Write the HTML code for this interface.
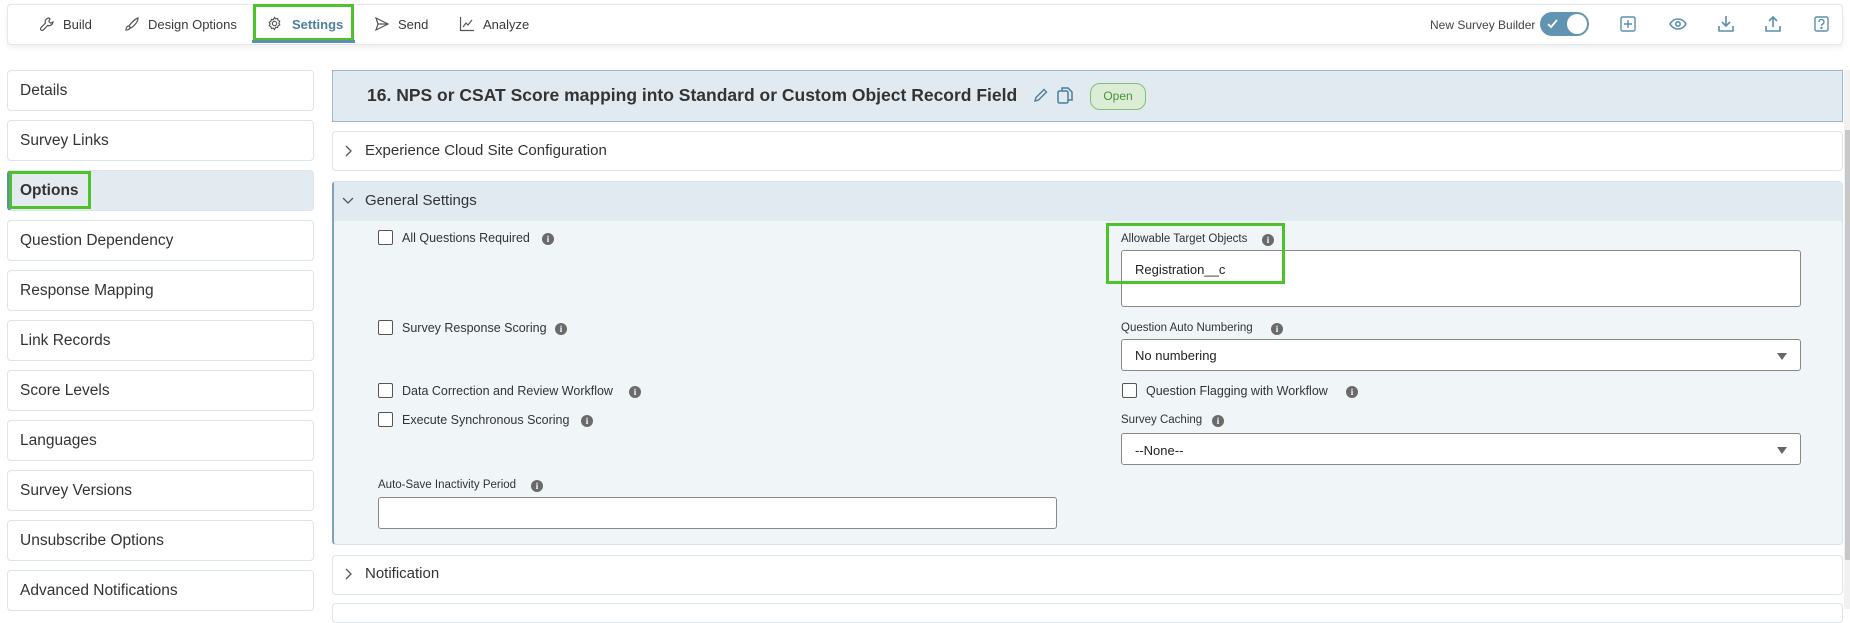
<!DOCTYPE html>
<html><head><meta charset="utf-8"><style>
*{box-sizing:border-box;margin:0;padding:0}
body{width:1850px;height:609px;overflow:hidden;background:#fff;font-family:"Liberation Sans",sans-serif;color:#3a3a3a;position:relative}
.a{position:absolute}
.t{position:absolute;white-space:nowrap;line-height:1}
.side{position:absolute;left:7px;width:307px;height:41px;border:1px solid #dde5ea;border-radius:4px;background:#fff;font-size:15.5px;color:#333;padding-left:12px;line-height:39px}
.cb{position:absolute;width:15px;height:15px;border:1px solid #555;border-radius:2px;background:#fff}
.lbl{font-size:12.5px;color:#333}
.sl{font-size:11.5px;color:#333}
.info{position:absolute;width:12px;height:12px;border-radius:50%;background:#6a6a6a;color:#fff;font-size:9px;font-weight:bold;text-align:center;line-height:12px;font-family:"Liberation Serif",serif}
.inp{position:absolute;background:#fff;border:1px solid #888;border-radius:3px}
.ic{position:absolute}
</style></head><body>
<div class="a" style="left:7px;top:4px;width:1836px;height:41px;border:1px solid #e3e6ea;border-radius:4px;box-shadow:0 3px 6px rgba(0,0,0,0.06)"></div>
<svg class="ic" style="left:39px;top:16px" width="16" height="16" viewBox="0 0 16 16" fill="none" stroke="#555" stroke-width="1.2"><path d="M10 2a4 4 0 0 0-3.6 5.2L2 11.6a1.5 1.5 0 0 0 2.3 2.3l4.4-4.4A4 4 0 0 0 14 6l-2.4 1.2-1.8-1.8L11 3z"/></svg>
<div class="t" style="left:63px;top:18px;font-size:13px">Build</div>
<svg class="ic" style="left:124px;top:16px" width="16" height="16" viewBox="0 0 16 16" fill="none" stroke="#555" stroke-width="1.2"><path d="M14 2c-3 1-7 5-9 8l2 2c3-2 7-6 7-10zM5 10c-2 0-3 1.5-3 4 2.5 0 4-1 4-3"/></svg>
<div class="t" style="left:148px;top:18px;font-size:13px">Design Options</div>
<div class="a" style="left:253px;top:4px;width:101px;height:37px;border:3px solid #4dc22a"></div>
<div class="a" style="left:252px;top:40px;width:103px;height:3px;background:#5b8fae"></div>
<svg class="ic" style="left:267px;top:16px" width="15" height="15" viewBox="0 0 16 16" fill="none" stroke="#555" stroke-width="1.2"><circle cx="8" cy="8" r="2.3"/><path d="M8 1.5l1.3 1.6 2-.5.5 2 1.8 1-.9 1.9.9 1.9-1.8 1-.5 2-2-.5L8 14.5l-1.3-1.6-2 .5-.5-2-1.8-1 .9-1.9-.9-1.9 1.8-1 .5-2 2 .5z"/></svg>
<div class="t" style="left:292px;top:18px;font-size:13px;font-weight:bold;color:#4f7f9f">Settings</div>
<svg class="ic" style="left:374px;top:16px" width="16" height="16" viewBox="0 0 16 16" fill="none" stroke="#555" stroke-width="1.2"><path d="M2 2l12 6-12 6 2-6z M4 8h10"/></svg>
<div class="t" style="left:398px;top:18px;font-size:13px">Send</div>
<svg class="ic" style="left:459px;top:16px" width="16" height="16" viewBox="0 0 16 16" fill="none" stroke="#555" stroke-width="1.2"><path d="M1.5 1v13.5H15 M4 11l3-4 2 2 4-5"/></svg>
<div class="t" style="left:483px;top:18px;font-size:13px">Analyze</div>
<div class="t" style="left:1430px;top:19px;font-size:12px;color:#444">New Survey Builder</div>
<div class="a" style="left:1540px;top:12px;width:49px;height:24px;border-radius:12px;background:#6194b2"></div>
<div class="a" style="left:1567px;top:14px;width:20px;height:20px;border-radius:50%;background:#fff"></div>
<svg class="ic" style="left:1546px;top:18px" width="13" height="12" viewBox="0 0 13 12" fill="none" stroke="#fff" stroke-width="1.8"><path d="M2 6l3 3 6-7"/></svg>
<svg class="ic" style="left:1620px;top:16px" width="16" height="16" viewBox="0 0 16 16" fill="none" stroke="#5b8fae" stroke-width="1.4"><rect x="1" y="1" width="14" height="14" rx="1.5"/><path d="M8 4v8M4 8h8"/></svg>
<svg class="ic" style="left:1669px;top:16px" width="18" height="16" viewBox="0 0 18 16" fill="none" stroke="#5b8fae" stroke-width="1.6"><path d="M1 8c2-3.5 5-5 8-5s6 1.5 8 5c-2 3.5-5 5-8 5s-6-1.5-8-5z"/><circle cx="9" cy="8" r="2.2"/></svg>
<svg class="ic" style="left:1718px;top:15px" width="16" height="17" viewBox="0 0 16 17" fill="none" stroke="#5b8fae" stroke-width="1.6"><path d="M8 1v10M4 7l4 4 4-4M1 11v5h14v-5"/></svg>
<svg class="ic" style="left:1765px;top:15px" width="16" height="17" viewBox="0 0 16 17" fill="none" stroke="#5b8fae" stroke-width="1.6"><path d="M8 12V2M4 6l4-4 4 4M1 11v5h14v-5"/></svg>
<svg class="ic" style="left:1814px;top:16px" width="15" height="16" viewBox="0 0 15 16" fill="none" stroke="#5b8fae" stroke-width="1.4"><rect x="1" y="1" width="13" height="14" rx="1.5"/><path d="M5 6a2.5 2.5 0 1 1 3.5 2.2c-.7.3-1 .8-1 1.6"/><circle cx="7.5" cy="12" r=".5"/></svg>
<div class="side" style="top:70px">Details</div>
<div class="side" style="top:120px">Survey Links</div>
<div class="side" style="top:170px;background:#e3eaf0;border-left:3px solid #5b8fae;padding-left:10px;font-weight:bold">Options</div>
<div class="a" style="left:9px;top:171px;width:82px;height:38px;border:3px solid #4dc22a"></div>
<div class="side" style="top:220px">Question Dependency</div>
<div class="side" style="top:270px">Response Mapping</div>
<div class="side" style="top:320px">Link Records</div>
<div class="side" style="top:370px">Score Levels</div>
<div class="side" style="top:420px">Languages</div>
<div class="side" style="top:470px">Survey Versions</div>
<div class="side" style="top:520px">Unsubscribe Options</div>
<div class="side" style="top:570px">Advanced Notifications</div>
<div class="a" style="left:332px;top:70px;width:1511px;height:52px;background:#e2eaf1;border:1px solid #9db8ca"></div>
<div class="t" style="left:367px;top:87px;font-size:17.5px;font-weight:bold;color:#333">16. NPS or CSAT Score mapping into Standard or Custom Object Record Field</div>
<svg class="ic" style="left:1033px;top:88px" width="15" height="15" viewBox="0 0 15 15" fill="none" stroke="#4a7d9c" stroke-width="1.4"><path d="M2 13l1-3.5 8-8 2.5 2.5-8 8z"/></svg>
<svg class="ic" style="left:1056px;top:86px" width="18" height="18" viewBox="0 0 18 18" fill="none" stroke="#4a7d9c" stroke-width="1.5"><path d="M6 5V2h6l4 4v8h-4"/><rect x="2" y="5" width="10" height="12" rx="1.5"/></svg>
<div class="a" style="left:1090px;top:83px;width:56px;height:27px;border:1px solid #86bd7a;border-radius:10px;background:#dbeed5;color:#4c8f3c;font-size:12px;text-align:center;line-height:25px">Open</div>
<div class="a" style="left:332px;top:131px;width:1511px;height:40px;border:1px solid #dde5ea;border-radius:4px;background:#fff"></div>
<svg class="ic" style="left:343px;top:144px" width="10" height="14" viewBox="0 0 10 14" fill="none" stroke="#555" stroke-width="1.3"><path d="M3 2l5 5-5 5"/></svg>
<div class="t" style="left:365px;top:143px;font-size:15px;color:#333">Experience Cloud Site Configuration</div>
<div class="a" style="left:332px;top:181px;width:1511px;height:364px;border:1px solid #d8e2e9;border-left:2px solid #7fa3bb;border-radius:4px;background:#f0f5f8"></div>
<div class="a" style="left:334px;top:182px;width:1508px;height:39px;background:#e2eaf1"></div>
<svg class="ic" style="left:341px;top:196px" width="14" height="10" viewBox="0 0 14 10" fill="none" stroke="#555" stroke-width="1.3"><path d="M2 2l5 5 5-5"/></svg>
<div class="t" style="left:365px;top:193px;font-size:15px;color:#333">General Settings</div>
<div class="cb" style="left:378px;top:230px"></div><div class="t lbl" style="left:402px;top:232px">All Questions Required</div><div class="info" style="left:542px;top:233px">i</div>
<div class="cb" style="left:378px;top:320px"></div><div class="t lbl" style="left:402px;top:322px">Survey Response Scoring</div><div class="info" style="left:555px;top:323px">i</div>
<div class="cb" style="left:378px;top:383px"></div><div class="t lbl" style="left:402px;top:385px">Data Correction and Review Workflow</div><div class="info" style="left:629px;top:386px">i</div>
<div class="cb" style="left:378px;top:412px"></div><div class="t lbl" style="left:402px;top:414px">Execute Synchronous Scoring</div><div class="info" style="left:581px;top:415px">i</div>
<div class="t sl" style="left:378px;top:480px">Auto-Save Inactivity Period</div><div class="info" style="left:531px;top:480px">i</div>
<div class="inp" style="left:378px;top:497px;width:679px;height:32px"></div>
<div class="t sl" style="left:1121px;top:234px">Allowable Target Objects</div><div class="info" style="left:1262px;top:234px">i</div>
<div class="inp" style="left:1121px;top:250px;width:680px;height:57px"></div>
<div class="t" style="left:1135px;top:263px;font-size:13px;color:#222">Registration__c</div>
<div class="a" style="left:1106px;top:223px;width:179px;height:61px;border:3px solid #4dc22a"></div>
<div class="t sl" style="left:1121px;top:323px">Question Auto Numbering</div><div class="info" style="left:1271px;top:323px">i</div>
<div class="inp" style="left:1121px;top:339px;width:680px;height:32px"></div>
<div class="t" style="left:1135px;top:349px;font-size:13px;color:#222">No numbering</div>
<div class="a" style="left:1777px;top:353px;border-left:5px solid transparent;border-right:5px solid transparent;border-top:7px solid #666"></div>
<div class="cb" style="left:1122px;top:383px"></div><div class="t lbl" style="left:1146px;top:385px">Question Flagging with Workflow</div><div class="info" style="left:1346px;top:386px">i</div>
<div class="t sl" style="left:1121px;top:415px">Survey Caching</div><div class="info" style="left:1212px;top:415px">i</div>
<div class="inp" style="left:1121px;top:433px;width:680px;height:32px"></div>
<div class="t" style="left:1135px;top:444px;font-size:13px;color:#222">--None--</div>
<div class="a" style="left:1777px;top:447px;border-left:5px solid transparent;border-right:5px solid transparent;border-top:7px solid #666"></div>
<div class="a" style="left:332px;top:555px;width:1511px;height:40px;border:1px solid #dde5ea;border-radius:4px;background:#fff"></div>
<svg class="ic" style="left:343px;top:567px" width="10" height="14" viewBox="0 0 10 14" fill="none" stroke="#555" stroke-width="1.3"><path d="M3 2l5 5-5 5"/></svg>
<div class="t" style="left:365px;top:566px;font-size:15px;color:#333">Notification</div>
<div class="a" style="left:332px;top:603px;width:1511px;height:20px;border:1px solid #dde5ea;border-radius:4px;background:#fff"></div>
<div class="a" style="left:1844px;top:70px;width:6px;height:539px;background:#f1f1f1"></div>
<div class="a" style="left:1845px;top:130px;width:5px;height:430px;background:#c8c8c8"></div>
</body></html>
